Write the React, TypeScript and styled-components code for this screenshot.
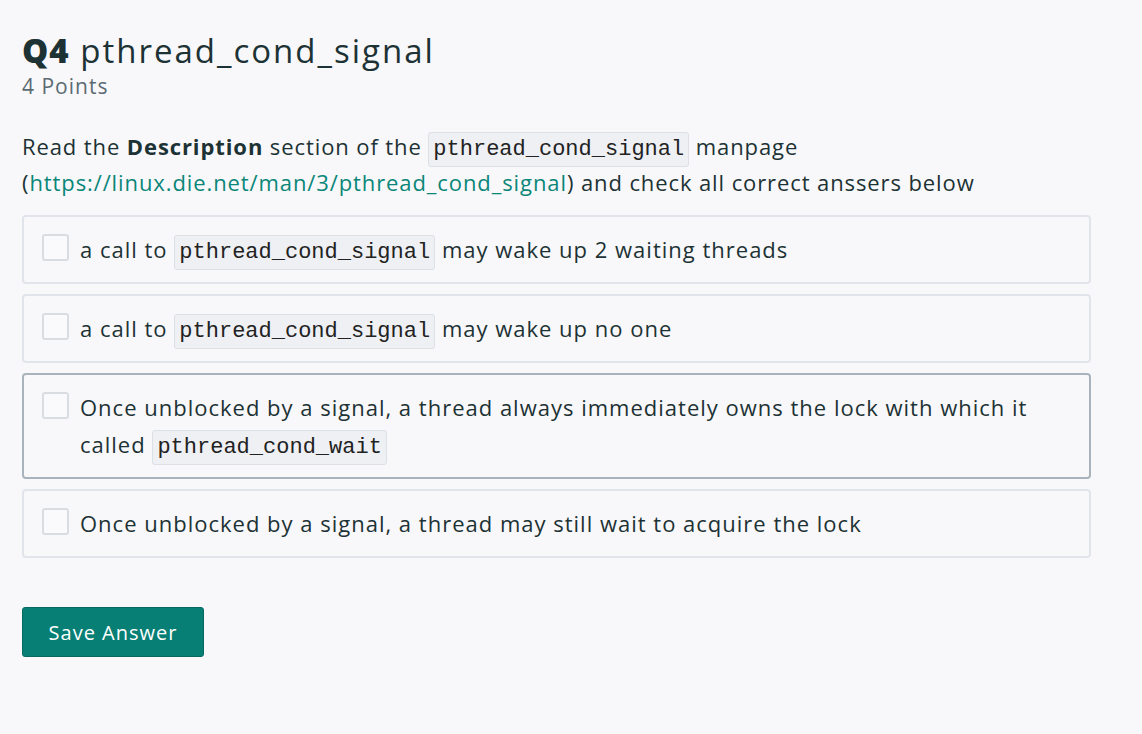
import styled, { createGlobalStyle } from "styled-components";

const GlobalStyle = createGlobalStyle`
  body {
    margin: 0;
    background: #f8f8fa;
    font-family: "Open Sans", Lato, sans-serif;
    color: #1d3234;
  }
`;

const options = [
  { id: 1, before: "a call to ", code: "pthread_cond_signal", after: " may wake up 2 waiting threads" },
  { id: 2, before: "a call to ", code: "pthread_cond_signal", after: " may wake up no one" },
  {
    id: 3,
    before:
      "Once unblocked by a signal, a thread always immediately owns the lock with which it called ",
    code: "pthread_cond_wait",
    after: "",
    active: true,
  },
  { id: 4, before: "Once unblocked by a signal, a thread may still wait to acquire the lock", code: "", after: "" },
];

export default function App() {
  return (
    <>
      <GlobalStyle />
      <Page>
        <Title>
          <strong>Q4</strong> pthread_cond_signal
        </Title>
        <Points>4 Points</Points>
        <Prompt>
          Read the <strong>Description</strong> section of the{" "}
          <Code>pthread_cond_signal</Code> manpage (
          <Link href="#">https://linux.die.net/man/3/pthread_cond_signal</Link>)
          and check all correct anssers below
        </Prompt>
        <OptionList>
          {options.map((o) => (
            <Option key={o.id} $active={o.active}>
              <Box />
              <OptionText>
                {o.before}
                {o.code && <Code>{o.code}</Code>}
                {o.after}
              </OptionText>
            </Option>
          ))}
        </OptionList>
        <SaveButton>Save Answer</SaveButton>
      </Page>
    </>
  );
}

const Page = styled.div`
  padding: 30px 51px 40px 22px;
`;

const Title = styled.h1`
  margin: 0;
  font-size: 33px;
  font-weight: 400;
  line-height: 42px;
  letter-spacing: 2px;

  strong {
    font-weight: 800;
    letter-spacing: 1px;
  }
`;

const Points = styled.div`
  font-size: 21px;
  color: #5c6b72;
  line-height: 28px;
  letter-spacing: 1px;
`;

const Prompt = styled.p`
  margin: 28px 0 15px;
  font-size: 22px;
  line-height: 36px;
  letter-spacing: 0.9px;

  strong {
    font-weight: 700;
  }
`;

const Link = styled.a`
  color: #0a8679;
  text-decoration: none;
`;

const Code = styled.code`
  font-family: "Liberation Mono", "DejaVu Sans Mono", monospace;
  font-size: 22px;
  line-height: 1;
  letter-spacing: 0;
  color: #222;
  background: #eef0f4;
  border: 1px solid #dde1e6;
  border-radius: 3px;
  padding: 4px 4px;
`;

const OptionList = styled.div`
  display: flex;
  flex-direction: column;
  gap: 10px;
`;

const Option = styled.label<{ $active?: boolean }>`
  display: flex;
  align-items: flex-start;
  gap: 11px;
  padding: 14px 20px 14px 18px;
  border: 2px solid ${(p) => (p.$active ? "#a9b3bb" : "#e1e4ea")};
  border-radius: 4px;
  font-size: 22px;
  line-height: 37px;
  letter-spacing: 1px;
`;

const Box = styled.span`
  flex: none;
  width: 23px;
  height: 23px;
  margin-top: 3px;
  border: 2px solid #d9dde2;
  border-radius: 3px;
  background: #fafafc;
`;

const OptionText = styled.span`
  flex: 1;
`;

const SaveButton = styled.button`
  margin-top: 49px;
  width: 182px;
  height: 50px;
  background: #087f75;
  border: 1px solid #066a62;
  border-radius: 3px;
  color: #fff;
  font-family: "Open Sans", sans-serif;
  font-size: 20px;
  letter-spacing: 1px;
  cursor: pointer;
`;
